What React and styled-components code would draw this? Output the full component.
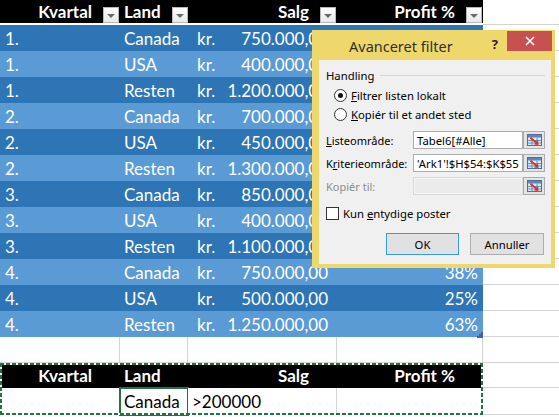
import React from "react";
import styled, { createGlobalStyle } from "styled-components";

const Global = createGlobalStyle`
  html, body { margin: 0; padding: 0; background: #fff; }
  body { width: 559px; height: 417px; overflow: hidden; }
`;

const W = { a: 120, b: 68, c: 149, d: 146, e: 76 };
const DARK = "#2E75B6";
const LIGHT = "#5B9BD5";
const GRID = "#D4D4D4";
const GREEN = "#217346";

const Sheet = styled.div`
  position: relative;
  width: 559px;
  height: 417px;
  overflow: hidden;
  font-family: Lato, "Liberation Sans", sans-serif;
  font-size: 17px;
  color: #fff;
`;

const Row = styled.div`
  display: flex;
  height: ${(p) => p.$h || 26}px;
`;

const HeadCell = styled.div`
  box-sizing: border-box;
  flex: none;
  width: ${(p) => p.$w}px;
  height: 100%;
  background: #000;
  border-bottom: ${(p) => (p.$gap ? 2 : 0)}px solid #fff;
  display: flex;
  align-items: center;
  padding: 0 1px 0 4px;
  font-weight: 700;
  white-space: nowrap;
`;

const HeadLabel = styled.span`
  flex: 1;
  text-align: ${(p) => (p.$right ? "right" : "left")};
`;

const FilterBtn = styled.div`
  flex: none;
  box-sizing: border-box;
  width: 16px;
  height: 16px;
  margin-left: 11px;
  align-self: flex-end;
  background: linear-gradient(#fdfdfd, #e9e9e9);
  border: 1px solid #b9b9b9;
  display: flex;
  align-items: center;
  justify-content: center;
  visibility: ${(p) => (p.$hidden ? "hidden" : "visible")};
  &::after {
    content: "";
    border-left: 4px solid transparent;
    border-right: 4px solid transparent;
    border-top: 4px solid #6b6b6b;
    margin-top: 1px;
  }
`;

const DataCell = styled.div`
  box-sizing: border-box;
  flex: none;
  width: ${(p) => p.$w}px;
  height: 100%;
  background: ${(p) => p.$bg};
  display: flex;
  align-items: center;
  justify-content: ${(p) => (p.$right ? "flex-end" : "flex-start")};
  padding: 0 ${(p) => p.$pr ?? 0}px 0 ${(p) => p.$pl ?? 4}px;
  white-space: nowrap;
`;

const MoneyCell = styled(DataCell)`
  justify-content: space-between;
  padding: 0 9px 0 9px;
`;

const GridCell = styled.div`
  box-sizing: border-box;
  flex: none;
  width: ${(p) => p.$w}px;
  height: 100%;
  background: #fff;
  border-bottom: 1px solid ${GRID};
  border-right: ${(p) => (p.$vline ? `1px solid ${GRID}` : "none")};
`;

const BottomBlock = styled.div`
  display: flex;
`;

const Criteria = styled.div`
  position: relative;
  width: ${W.a + W.b + W.c + W.d}px;
  &::after {
    content: "";
    position: absolute;
    inset: 0;
    pointer-events: none;
    background:
      repeating-linear-gradient(90deg, ${GREEN} 0 4px, #fff 4px 6px) left top / 100% 2px no-repeat,
      repeating-linear-gradient(90deg, ${GREEN} 0 4px, #fff 4px 6px) left bottom / 100% 2px no-repeat,
      repeating-linear-gradient(180deg, ${GREEN} 0 4px, #fff 4px 6px) left top / 2px 100% no-repeat,
      repeating-linear-gradient(180deg, ${GREEN} 0 4px, #fff 4px 6px) right top / 2px 100% no-repeat;
  }
`;

const SideColumn = styled.div`
  display: flex;
  flex-direction: column;
`;

const CritCell = styled.div`
  box-sizing: border-box;
  flex: none;
  width: ${(p) => p.$w}px;
  height: 100%;
  background: #fff;
  color: #000;
  display: flex;
  align-items: center;
  padding-left: 4px;
  white-space: nowrap;
  border-right: ${(p) => (p.$vline ? `1px solid ${GRID}` : "none")};
  outline: ${(p) => (p.$selected ? `2px solid ${GREEN}` : "none")};
  outline-offset: -1px;
`;

const ResizeHandle = styled.svg`
  position: absolute;
  left: 477px;
  top: 332px;
`;

/* ---------------- dialog ---------------- */

const Dialog = styled.div`
  position: absolute;
  left: 312px;
  top: 30px;
  width: 243px;
  height: 238px;
  box-sizing: border-box;
  background: #EFD86B;
  padding: 0 4px 4px 7px;
  display: flex;
  flex-direction: column;
  font-family: "Noto Sans", "Open Sans", sans-serif;
  font-size: 11.3px;
  color: #000;
`;

const TitleBar = styled.div`
  height: 30px;
  flex: none;
  display: flex;
  align-items: flex-start;
`;

const Title = styled.div`
  flex: 1;
  margin-left: 30px;
  padding-top: 6px;
  line-height: 20px;
  font-size: 14.5px;
  color: #2f2f2f;
`;

const Help = styled.div`
  margin-top: 6px;
  margin-right: 9px;
  font-weight: 700;
  font-size: 13px;
  line-height: 16px;
  color: #222;
`;

const Close = styled.div`
  width: 45px;
  height: 20px;
  margin-top: 1px;
  margin-right: -1px;
  background: #C75050;
  display: flex;
  align-items: center;
  justify-content: center;
`;

const Panel = styled.div`
  flex: 1;
  background: #F0F0F0;
  padding: 8px 6px 0 7px;
  display: flex;
  flex-direction: column;
`;

const Legend = styled.div`
  height: 14px;
  display: flex;
  align-items: center;
  &::after {
    content: "";
    flex: 1;
    height: 1px;
    background: #D5D5D5;
    margin-left: 6px;
  }
`;

const RadioRow = styled.div`
  height: 19px;
  display: flex;
  align-items: center;
  padding-left: 8px;
  gap: 4px;
  margin-top: ${(p) => p.$mt || 0}px;
`;

const Radio = styled.span`
  box-sizing: border-box;
  width: 13px;
  height: 13px;
  border-radius: 50%;
  border: 1px solid #333;
  background: #fff;
  display: flex;
  align-items: center;
  justify-content: center;
  &::after {
    content: "";
    width: 5px;
    height: 5px;
    border-radius: 50%;
    background: ${(p) => (p.$checked ? "#111" : "transparent")};
  }
`;

const FieldRow = styled.div`
  height: 18px;
  display: flex;
  align-items: center;
  margin-top: ${(p) => p.$mt}px;
`;

const FieldLabel = styled.div`
  width: 87px;
  white-space: nowrap;
  font-size: 11px;
  color: ${(p) => (p.$disabled ? "#8d8d8d" : "#000")};
`;

const Input = styled.div`
  box-sizing: border-box;
  width: 110px;
  height: 18px;
  border: 1px solid ${(p) => (p.$disabled ? "#D9D9D9" : "#ABADB3")};
  background: ${(p) => (p.$disabled ? "#EBEBEB" : "#fff")};
  box-shadow: ${(p) => (p.$disabled ? "inset 0 0 0 1px #F4F4F4" : "none")};
  padding-left: 3px;
  display: flex;
  align-items: center;
  white-space: nowrap;
  overflow: hidden;
`;

const RangeBtn = styled.div`
  box-sizing: border-box;
  width: 22px;
  height: 18px;
  border: 1px solid #ADADAD;
  background: #E4E4E4;
  display: flex;
  align-items: center;
  justify-content: center;
`;

const CheckRow = styled.div`
  height: 14px;
  margin-top: 11px;
  display: flex;
  align-items: center;
  gap: 4px;
`;

const Checkbox = styled.span`
  box-sizing: border-box;
  width: 13px;
  height: 13px;
  border: 1px solid #333;
  background: #fff;
`;

const ButtonRow = styled.div`
  margin-top: 13px;
  display: flex;
  justify-content: flex-end;
  gap: 11px;
  padding-right: 1px;
`;

const DlgButton = styled.div`
  box-sizing: border-box;
  width: ${(p) => p.$w}px;
  height: 22px;
  border: 1px solid ${(p) => (p.$primary ? "#3C9BE8" : "#ADADAD")};
  background: #E1E1E1;
  display: flex;
  align-items: center;
  justify-content: center;
`;

const Mn = styled.span`
  text-decoration: underline;
`;

const RangeIcon = () => (
  <svg width="15" height="12" viewBox="0 0 15 12">
    <rect x="0.5" y="0.5" width="14" height="11" fill="#DCE9F7" stroke="#4E6E96" />
    <rect x="1" y="1" width="13" height="2.5" fill="#5B86BF" />
    <path d="M1 6.5H14M1 9H14M5 3.5V11.5M10 3.5V11.5" stroke="#6F8FB8" strokeWidth="1" />
    <path d="M4 3 L9.5 7.5 L11 6 L11.5 11 L7 10.5 L8.3 9.1 L2.8 4.4 Z" fill="#D8332A" />
  </svg>
);

/* percentages of rows 1-9 lie hidden under the dialog in the screenshot */
const rows = [
  ["1.", "Canada", "750.000,00", ""],
  ["1.", "USA", "400.000,00", ""],
  ["1.", "Resten", "1.200.000,00", ""],
  ["2.", "Canada", "700.000,00", ""],
  ["2.", "USA", "450.000,00", ""],
  ["2.", "Resten", "1.300.000,00", ""],
  ["3.", "Canada", "850.000,00", ""],
  ["3.", "USA", "400.000,00", ""],
  ["3.", "Resten", "1.100.000,00", ""],
  ["4.", "Canada", "750.000,00", "38%"],
  ["4.", "USA", "500.000,00", "25%"],
  ["4.", "Resten", "1.250.000,00", "63%"],
];

const Header = ({ gap, filter }) => (
  <>
    <HeadCell $w={W.a} $gap={gap}>
      <HeadLabel $right>Kvartal</HeadLabel>
      <FilterBtn $hidden={!filter} />
    </HeadCell>
    <HeadCell $w={W.b} $gap={gap}>
      <HeadLabel>Land</HeadLabel>
      <FilterBtn $hidden={!filter} />
    </HeadCell>
    <HeadCell $w={W.c} $gap={gap}>
      <HeadLabel $right>Salg</HeadLabel>
      <FilterBtn $hidden={!filter} />
    </HeadCell>
    <HeadCell $w={W.d} $gap={gap}>
      <HeadLabel $right>Profit %</HeadLabel>
      <FilterBtn $hidden={!filter} />
    </HeadCell>
  </>
);

export default function App() {
  return (
    <>
      <Global />
      <Sheet>
        <Row $h={25}>
          <Header gap filter />
          <GridCell $w={W.e} />
        </Row>
        {rows.map((r, i) => {
          const bg = i % 2 === 0 ? DARK : LIGHT;
          return (
            <Row key={i}>
              <DataCell $w={W.a} $bg={bg} $pl={5}>{r[0]}</DataCell>
              <DataCell $w={W.b} $bg={bg}>{r[1]}</DataCell>
              <MoneyCell $w={W.c} $bg={bg}>
                <span>kr.</span>
                <span>{r[2]}</span>
              </MoneyCell>
              <DataCell $w={W.d} $bg={bg} $right $pr={5}>{r[3]}</DataCell>
              <GridCell $w={W.e} />
            </Row>
          );
        })}
        <Row>
          <GridCell $w={W.a} $vline />
          <GridCell $w={W.b} $vline />
          <GridCell $w={W.c} $vline />
          <GridCell $w={W.d} $vline />
          <GridCell $w={W.e} />
        </Row>
        <BottomBlock>
          <Criteria>
            <Row $h={25}>
              <Header />
            </Row>
            <Row $h={27}>
              <CritCell $w={W.a} />
              <CritCell $w={W.b} $selected>Canada</CritCell>
              <CritCell $w={W.c} $vline>&gt;200000</CritCell>
              <CritCell $w={W.d} />
            </Row>
          </Criteria>
          <SideColumn>
            <Row $h={25}><GridCell $w={W.e} /></Row>
            <Row $h={27}><GridCell $w={W.e} /></Row>
          </SideColumn>
        </BottomBlock>

        <ResizeHandle width="6" height="6" viewBox="0 0 6 6">
          <rect x="4" y="0" width="2" height="2" fill="#4A5BA8" />
          <rect x="2" y="2" width="2" height="2" fill="#4A5BA8" />
          <rect x="4" y="2" width="2" height="2" fill="#4A5BA8" />
          <rect x="0" y="4" width="2" height="2" fill="#4A5BA8" />
          <rect x="2" y="4" width="2" height="2" fill="#4A5BA8" />
          <rect x="4" y="4" width="2" height="2" fill="#4A5BA8" />
        </ResizeHandle>

        <Dialog>
          <TitleBar>
            <Title>Avanceret filter</Title>
            <Help>?</Help>
            <Close>
              <svg width="10" height="10" viewBox="0 0 10 10">
                <path d="M1 1L9 9M9 1L1 9" stroke="#fff" strokeWidth="1.6" />
              </svg>
            </Close>
          </TitleBar>
          <Panel>
            <Legend>Handling</Legend>
            <RadioRow $mt={4}>
              <Radio $checked />
              <span><Mn>F</Mn>iltrer listen lokalt</span>
            </RadioRow>
            <RadioRow>
              <Radio />
              <span><Mn>K</Mn>opiér til et andet sted</span>
            </RadioRow>
            <FieldRow $mt={7}>
              <FieldLabel><Mn>L</Mn>isteområde:</FieldLabel>
              <Input>Tabel6[#Alle]</Input>
              <RangeBtn><RangeIcon /></RangeBtn>
            </FieldRow>
            <FieldRow $mt={5}>
              <FieldLabel>K<Mn>r</Mn>iterieområde:</FieldLabel>
              <Input>'Ark1'!$H$54:$K$55</Input>
              <RangeBtn><RangeIcon /></RangeBtn>
            </FieldRow>
            <FieldRow $mt={5}>
              <FieldLabel $disabled>Kopiér til:</FieldLabel>
              <Input $disabled />
              <RangeBtn><RangeIcon /></RangeBtn>
            </FieldRow>
            <CheckRow>
              <Checkbox />
              <span>Kun <Mn>e</Mn>ntydige poster</span>
            </CheckRow>
            <ButtonRow>
              <DlgButton $w={73} $primary>OK</DlgButton>
              <DlgButton $w={74}>Annuller</DlgButton>
            </ButtonRow>
          </Panel>
        </Dialog>
      </Sheet>
    </>
  );
}
